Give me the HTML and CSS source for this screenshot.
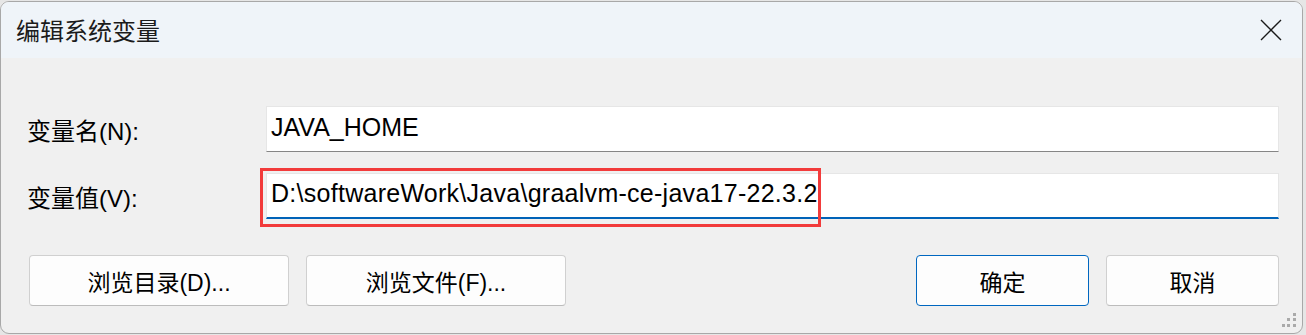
FILE: index.html
```html
<!DOCTYPE html>
<html lang="zh-CN">
<head>
    <meta charset="UTF-8">
    <title>编辑系统变量</title>
    <link rel="stylesheet" href="styles.css">
</head>
<body>
    <div class="window">
        <div class="titlebar">
            <span class="title">编辑系统变量</span>
            <span class="close">
                <svg width="22" height="22" viewBox="0 0 22 22">
                    <path d="M1 1 L21 21 M21 1 L1 21" stroke="#1a1a1a" stroke-width="1.4" fill="none"/>
                </svg>
            </span>
        </div>
        <div class="content">
            <div class="form">
                <label class="label">变量名(N):</label>
                <div class="field">JAVA_HOME</div>
                <label class="label">变量值(V):</label>
                <div class="field focused">
                    D:\softwareWork\Java\graalvm-ce-java17-22.3.2
                    <span class="mark"></span>
                </div>
            </div>
            <div class="buttons">
                <div class="group">
                    <button class="btn wide">浏览目录(D)...</button>
                    <button class="btn wide">浏览文件(F)...</button>
                </div>
                <div class="group">
                    <button class="btn primary">确定</button>
                    <button class="btn">取消</button>
                </div>
            </div>
        </div>
        <svg class="grip" width="16" height="16" viewBox="0 0 16 16">
            <rect x="12" y="1" width="3" height="3" fill="#aaaaaa"/>
            <rect x="6" y="6" width="3" height="3" fill="#aaaaaa"/>
            <rect x="12" y="6" width="3" height="3" fill="#aaaaaa"/>
            <rect x="1" y="12" width="3" height="3" fill="#aaaaaa"/>
            <rect x="6" y="12" width="3" height="3" fill="#aaaaaa"/>
            <rect x="12" y="12" width="3" height="3" fill="#aaaaaa"/>
        </svg>
    </div>
</body>
</html>
```

FILE: styles.css
```css
body {
    margin: 0;
    background-color: #e6e6e6;
    font-family: "Liberation Sans", "Noto Sans CJK SC", sans-serif;
    color: #000;
}

.window {
    position: relative;
    box-sizing: border-box;
    width: 1303px;
    height: 333px;
    margin: 1px 0 0 0;
    border: 1px solid #a8a8a8;
    border-radius: 9px;
    background-color: #f0f0f0;
    overflow: hidden;
}

.titlebar {
    display: flex;
    align-items: center;
    justify-content: space-between;
    height: 56px;
    padding: 0 20px 0 15px;
    background-color: #eff4f9;
}

.title {
    font-size: 24px;
    color: #1b1b1b;
    padding-bottom: 2px;
}

.close {
    display: flex;
    width: 22px;
    height: 22px;
}

.content {
    padding: 48px 23px 0 26px;
}

.form {
    display: grid;
    grid-template-columns: 239px 1013px;
    row-gap: 21px;
    align-items: center;
}

.label {
    font-size: 24px;
}

.field {
    position: relative;
    box-sizing: border-box;
    height: 46px;
    padding: 0 0 4px 4px;
    display: flex;
    align-items: center;
    font-size: 25px;
    background-color: #fff;
    border: 1px solid #e6e6e6;
    border-bottom: 1px solid #868686;
}

.field.focused {
    border-bottom: 2px solid #0063b8;
    letter-spacing: 0.27px;
}

.mark {
    position: absolute;
    left: -7px;
    top: -6px;
    width: 555px;
    height: 53px;
    border: 3px solid #f23b3b;
}

.buttons {
    display: flex;
    justify-content: space-between;
    margin-top: 36px;
    padding-left: 2px;
}

.group {
    display: flex;
    gap: 17px;
}

.btn {
    box-sizing: border-box;
    width: 173px;
    height: 51px;
    font-family: inherit;
    font-size: 23px;
    color: #000;
    background-color: #fdfdfd;
    border: 1px solid #d0d0d0;
    border-bottom-color: #bcbcbc;
    border-radius: 4px;
    padding: 0;
}

.btn.wide {
    width: 260px;
}

.btn.primary {
    border: 1px solid #0067c0;
}

.grip {
    position: absolute;
    right: 5px;
    bottom: 5px;
}
```
